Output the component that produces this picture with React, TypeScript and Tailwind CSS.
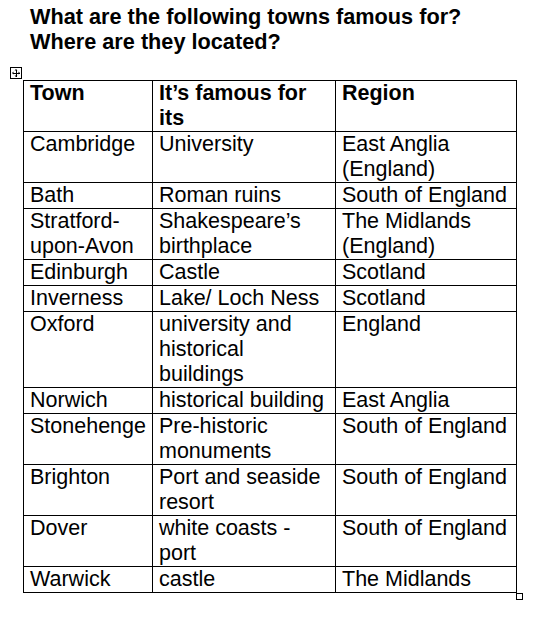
import React from 'react';

type Row = { town: string[]; famous: string[]; region: string[] };

const rows: Row[] = [
  { town: ['Cambridge'], famous: ['University'], region: ['East Anglia', '(England)'] },
  { town: ['Bath'], famous: ['Roman ruins'], region: ['South of England'] },
  { town: ['Stratford-', 'upon-Avon'], famous: ['Shakespeare’s', 'birthplace'], region: ['The Midlands', '(England)'] },
  { town: ['Edinburgh'], famous: ['Castle'], region: ['Scotland'] },
  { town: ['Inverness'], famous: ['Lake/ Loch Ness'], region: ['Scotland'] },
  { town: ['Oxford'], famous: ['university and', 'historical', 'buildings'], region: ['England'] },
  { town: ['Norwich'], famous: ['historical building'], region: ['East Anglia'] },
  { town: ['Stonehenge'], famous: ['Pre-historic', 'monuments'], region: ['South of England'] },
  { town: ['Brighton'], famous: ['Port and seaside', 'resort'], region: ['South of England'] },
  { town: ['Dover'], famous: ['white coasts -', 'port'], region: ['South of England'] },
  { town: ['Warwick'], famous: ['castle'], region: ['The Midlands'] },
];

function Lines({ lines }: { lines: string[] }) {
  return (
    <>
      {lines.map((l, i) => (
        <React.Fragment key={i}>
          {i > 0 && <br />}
          {l}
        </React.Fragment>
      ))}
    </>
  );
}

function MoveHandle() {
  return (
    <svg width="12" height="12" viewBox="0 0 12 12" className="block">
      <rect x="0.5" y="0.5" width="11" height="11" fill="white" stroke="black" strokeWidth="1" />
      <path d="M6 2.5v7M2.5 6h7" stroke="black" strokeWidth="1" shapeRendering="crispEdges" />
      <path d="M6 2l-1.5 1.5h3zM6 10l-1.5-1.5h3zM2 6l1.5-1.5v3zM10 6l-1.5-1.5v3z" fill="black" />
    </svg>
  );
}

const cell = 'border border-black px-[6px] py-0 align-top text-left whitespace-nowrap';

export default function App() {
  return (
    <div className="relative w-[537px] h-[618px] bg-white text-black font-['Liberation_Sans',Arial,sans-serif] overflow-hidden">
      <h1 className="pl-[30px] pt-[5px] text-[21.7px] leading-[24.5px] font-bold">
        What are the following towns famous for?
        <br />
        Where are they located?
      </h1>

      <div className="relative ml-[23px] mt-[26px] w-fit">
        <div className="absolute -left-[13px] -top-[13px]">
          <MoveHandle />
        </div>

        <table className="table-fixed border-collapse text-[21.5px] leading-[25px] w-[493px]">
          <colgroup>
            <col className="w-[129px]" />
            <col className="w-[183px]" />
            <col className="w-[181px]" />
          </colgroup>
          <thead>
            <tr>
              <th className={`${cell} font-bold`}>Town</th>
              <th className={`${cell} font-bold`}>
                It’s famous for
                <br />
                its
              </th>
              <th className={`${cell} font-bold`}>Region</th>
            </tr>
          </thead>
          <tbody>
            {rows.map((r) => (
              <tr key={r.town.join('')}>
                <td className={cell}>
                  <Lines lines={r.town} />
                </td>
                <td className={cell}>
                  <Lines lines={r.famous} />
                </td>
                <td className={cell}>
                  <Lines lines={r.region} />
                </td>
              </tr>
            ))}
          </tbody>
        </table>

        <div className="absolute -right-[6px] -bottom-[7px] w-[7px] h-[7px] border border-black bg-white" />
      </div>
    </div>
  );
}
